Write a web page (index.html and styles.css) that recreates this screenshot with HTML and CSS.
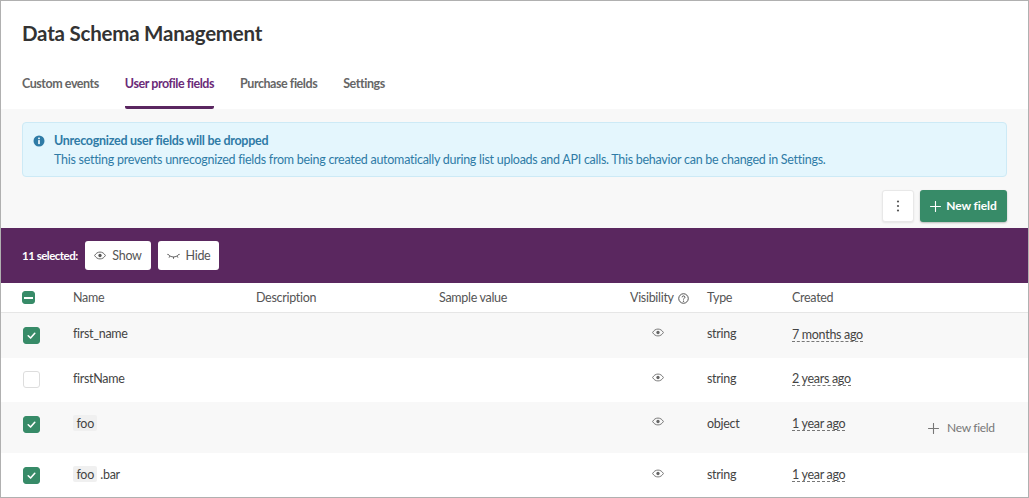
FILE: index.html
```html
<!DOCTYPE html>
<html lang="en">
<head>
<meta charset="utf-8">
<title>Data Schema Management</title>
<link rel="stylesheet" href="styles.css">
</head>
<body>
<svg class="defs" width="0" height="0" aria-hidden="true">
  <symbol id="eye" viewBox="0 0 14 10">
    <path d="M.7 5C2.2 2.4 4.4 1 7 1s4.800 1.400 6.300 4C11.800 7.600 9.600 9 7 9S2.200 7.600.7 5Z" fill="none" stroke="currentColor" stroke-width="1"/>
    <circle cx="7" cy="5" r="1.900" fill="currentColor"/>
  </symbol>
  <symbol id="check" viewBox="0 0 16 16">
    <path d="M4.500 8.300 7 10.700 11.500 5.600" fill="none" stroke="#fff" stroke-width="1.700" stroke-linecap="round" stroke-linejoin="round"/>
  </symbol>
  <symbol id="plus" viewBox="0 0 12 12">
    <path d="M6 .5v11M.5 6h11" fill="none" stroke="currentColor" stroke-width="1.200" stroke-linecap="round"/>
  </symbol>
</svg>
<main class="window">
  <header class="top">
    <h1 class="title">Data Schema Management</h1>
    <nav class="tabs">
      <a class="tab">Custom events</a>
      <a class="tab tab-active">User profile fields</a>
      <a class="tab">Purchase fields</a>
      <a class="tab">Settings</a>
    </nav>
  </header>
  <section class="panel">
    <div class="notice">
      <svg class="notice-icon" viewBox="0 0 12 12" width="12" height="12"><circle cx="6" cy="6" r="5.500" fill="#2f7ba6"/><rect x="5.200" y="5.100" width="1.600" height="4" fill="#fff"/><rect x="5.200" y="2.600" width="1.600" height="1.600" fill="#fff"/></svg>
      <div class="notice-text">
        <div class="notice-title">Unrecognized user fields will be dropped</div>
        <div class="notice-body">This setting prevents unrecognized fields from being created automatically during list uploads and API calls. This behavior can be changed in Settings.</div>
      </div>
    </div>
    <div class="actions">
      <button class="btn-more" aria-label="More"><svg viewBox="0 0 4 14" width="4" height="14"><circle cx="2" cy="2.500" r="1.100" fill="#555"/><circle cx="2" cy="7" r="1.100" fill="#555"/><circle cx="2" cy="11.500" r="1.100" fill="#555"/></svg></button>
      <button class="btn-new"><svg class="plus-lg"><use href="#plus"/></svg>New field</button>
    </div>
  </section>
  <section class="bulk">
    <span class="bulk-count">11 selected:</span>
    <button class="btn-light btn-show"><svg class="eye-btn"><use href="#eye"/></svg>Show</button>
    <button class="btn-light btn-hide"><svg class="lash" viewBox="0 0 14 8"><path d="M1 2c1.700 2 3.700 3 6 3s4.300-1 6-3M3.300 4 2.200 5.800M7 5v2M10.700 4l1.100 1.800M.5 2.600 0 1.800M13.500 2.600l.5-.8" fill="none" stroke="currentColor" stroke-width="1"/></svg>Hide</button>
  </section>
  <section class="table">
    <div class="row row-head">
      <span class="box box-mixed"><i class="dash"></i></span>
      <span>Name</span><span>Description</span><span>Sample value</span>
      <span class="vis-head">Visibility
        <svg class="help" viewBox="0 0 12 12" width="11" height="11"><circle cx="6" cy="6" r="5.200" fill="none" stroke="currentColor"/><path d="M4.500 4.700A1.500 1.500 0 1 1 6.700 6C6.200 6.300 6 6.500 6 7.100" fill="none" stroke="currentColor"/><circle cx="6" cy="8.900" r=".7" fill="currentColor"/></svg>
      </span>
      <span>Type</span><span>Created</span>
    </div>
    <div class="row row-1 tint">
      <span class="box box-on"><svg class="tick"><use href="#check"/></svg></span>
      <span>first_name</span><span></span><span></span>
      <span class="vis"><svg class="eye"><use href="#eye"/></svg></span>
      <span>string</span><span class="when">7 months ago</span>
    </div>
    <div class="row row-2">
      <span class="box"></span>
      <span>firstName</span><span></span><span></span>
      <span class="vis"><svg class="eye"><use href="#eye"/></svg></span>
      <span>string</span><span class="when">2 years ago</span>
    </div>
    <div class="row row-3 tint">
      <span class="box box-on"><svg class="tick"><use href="#check"/></svg></span>
      <span><code class="chip">foo</code></span><span></span><span></span>
      <span class="vis"><svg class="eye"><use href="#eye"/></svg></span>
      <span>object</span><span class="when">1 year ago</span>
      <span class="add"><svg class="plus-sm"><use href="#plus"/></svg>New field</span>
    </div>
    <div class="row row-4">
      <span class="box box-on"><svg class="tick"><use href="#check"/></svg></span>
      <span><code class="chip">foo</code> .bar</span><span></span><span></span>
      <span class="vis"><svg class="eye"><use href="#eye"/></svg></span>
      <span>string</span><span class="when">1 year ago</span>
    </div>
  </section>
</main>
</body>
</html>
```
FILE: styles.css
```css
* { box-sizing: border-box; }
html, body { margin: 0; height: 100%; }
body {
  font-family: "Lato", "Liberation Sans", sans-serif;
  color: #3f3f3f;
  background: #fff;
  overflow: hidden;
}
.defs { position: absolute; }
.window {
  width: 1029px;
  height: 498px;
  border: 1px solid #b0b0b0;
  overflow: hidden;
  display: flex;
  flex-direction: column;
}
.top { height: 108px; padding: 0 21px; flex: none; }
.title {
  margin: 0;
  padding-top: 19px;
  height: 62px;
  font-size: 20.500px;
  line-height: 27px;
  font-weight: 700;
  color: #333;
  letter-spacing: -.22px;
}
.tabs { display: flex; gap: 26px; }
.tab {
  height: 46px;
  padding-top: 13px;
  font-size: 12.500px;
  line-height: 16px;
  font-weight: 700;
  color: #666;
  letter-spacing: -.45px;
  white-space: nowrap;
}
.tab-active { color: #6b2a78; border-bottom: 3px solid #5a2660; border-radius: 2px; }
.panel { height: 119px; flex: none; background: #f8f8f8; padding: 13px 21px 0; }
.notice {
  height: 55px;
  width: 985px;
  display: flex;
  gap: 9px;
  padding: 8px 10px;
  background: #e4f6fd;
  border: 1px solid #cdeaf6;
  border-radius: 4px;
  color: #2f7ba6;
  font-size: 12.500px;
  line-height: 19px;
  letter-spacing: -.27px;
}
.notice-icon { flex: none; margin-top: 4px; }
.notice-title { font-weight: 700; }
.actions { display: flex; justify-content: flex-end; gap: 6px; margin-top: 13px; width: 985px; }
.btn-more {
  width: 32px; height: 32px; padding: 0;
  display: flex; align-items: center; justify-content: center;
  background: #fff;
  border: 1px solid #e8e8e8;
  border-radius: 3px;
  box-shadow: 0 1px 2px rgba(0,0,0,.08);
}
.btn-new {
  width: 87px; height: 32px; padding: 0;
  display: flex; align-items: center; justify-content: center; gap: 5px;
  background: #378b68;
  color: #fff;
  border: 0;
  border-radius: 3px;
  box-shadow: 0 1px 2px rgba(0,0,0,.25);
  font: 700 12px/16px "Lato", "Liberation Sans", sans-serif;
  letter-spacing: -.1px;
}
.plus-lg { width: 11px; height: 11px; }
.bulk {
  height: 55px; flex: none;
  display: flex; align-items: center; gap: 7px;
  padding: 0 21px;
  background: #5a275f;
  color: #fff;
  font-size: 11.500px;
  font-weight: 700;
  letter-spacing: -.5px;
}
.bulk-count { width: 56px; white-space: nowrap; }
.btn-light {
  height: 29px; padding: 0;
  display: flex; align-items: center; justify-content: center; gap: 6px;
  background: #fff;
  color: #555;
  border: 0;
  border-radius: 3px;
  font: 400 12.500px/16px "Lato", "Liberation Sans", sans-serif;
  letter-spacing: -.3px;
}
.btn-show { width: 66px; }
.btn-hide { width: 61px; }
.eye-btn { width: 12px; height: 9px; }
.lash { width: 13px; height: 8px; }
.table { flex: 1; min-height: 0; font-size: 12.500px; line-height: 18px; letter-spacing: -.3px; color: #444; }
.row {
  display: grid;
  grid-template-columns: 51px 183px 183px 191px 77px 85px 136px 1fr;
  align-items: start;
  padding-left: 21px;
}
.row-head { height: 30px; padding-top: 6px; border-bottom: 1px solid #e6e6e6; color: #555; }
.row-1 { height: 45px; padding-top: 12px; }
.row-2 { height: 44px; padding-top: 12px; }
.row-3 { height: 51px; padding-top: 13px; }
.row-4 { height: 44px; padding-top: 13px; }
.tint { background: #f8f8f8; }
.box {
  width: 17px; height: 17px;
  margin: 1px 0 0 1px;
  background: #fff;
  border: 1px solid #ddd;
  border-radius: 3px;
  display: block;
}
.row-1 .box { margin-top: 2px; }
.box-on { background: #378b68; border-color: #378b68; }
.box-mixed { width: 13px; height: 13px; margin: 2px 0 0; background: #378b68; border-color: #378b68; display: flex; align-items: center; justify-content: center; }
.dash { width: 9px; height: 2px; background: #fff; }
.tick { width: 15px; height: 15px; display: block; }
.vis-head { display: flex; align-items: center; gap: 4px; }
.help { flex: none; color: #444; }
.vis { padding-left: 22px; margin-top: 2px; color: #666; line-height: 0; }
.row-3 .vis { margin-top: 1px; }
.vis .eye { width: 12px; height: 9px; margin-top: 1px; }
.when { justify-self: start; border-bottom: 1px dashed #777; line-height: 13px; margin-top: 2px; }
.row-1 .when { margin-top: 3px; }
.chip {
  display: inline-block;
  height: 16px;
  font: inherit;
  background: #f0f0f0;
  padding: 0 3.500px;
  border-radius: 2px;
  vertical-align: top;
}
.add {
  margin: 4px 0 0 0;
  display: flex; align-items: center; gap: 8px;
  color: #777;
  white-space: nowrap;
  font-size: 12px;
}
.plus-sm { width: 11px; height: 11px; }
```
